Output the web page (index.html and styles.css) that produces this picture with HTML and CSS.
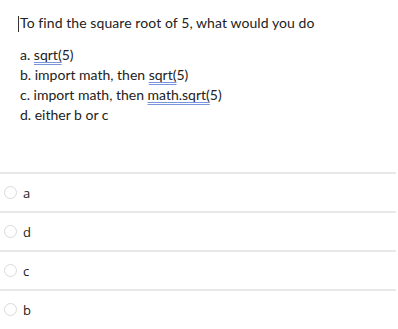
FILE: index.html
```html
<!DOCTYPE html>
<html>
<head>
<meta charset="utf-8">
<link rel="stylesheet" href="styles.css">
</head>
<body>
<div class="question">
  <p class="title"><span class="caret"></span>To find the square root of 5, what would you do</p>
  <div class="opts">
    <div>a. <span class="sq">sqrt(</span>5)</div>
    <div>b. import math, then <span class="sq">sqrt(</span>5)</div>
    <div>c. import math, then <span class="sq">math.sqrt(</span>5)</div>
    <div>d. either b or c</div>
  </div>
</div>
<div class="choices">
  <div class="choice"><span class="radio"></span><span class="lbl">a</span></div>
  <div class="choice"><span class="radio"></span><span class="lbl">d</span></div>
  <div class="choice"><span class="radio"></span><span class="lbl">c</span></div>
  <div class="choice"><span class="radio"></span><span class="lbl">b</span></div>
</div>
</body>
</html>
```
FILE: styles.css
```css
html, body {
  margin: 0;
  padding: 0;
  background: #fff;
}
body {
  width: 398px;
  height: 329px;
  overflow: hidden;
  font-family: "Lato", "Liberation Sans", sans-serif;
  color: #222;
}
.question {
  padding: 14px 0 0 20px;
  height: 172px;
  box-sizing: border-box;
}
.title {
  margin: 0;
  font-size: 14px;
  line-height: 18px;
  letter-spacing: 0.08px;
  position: relative;
}
.caret {
  position: absolute;
  left: -2px;
  top: 2px;
  width: 1px;
  height: 16px;
  background: #333;
}
.opts {
  margin-top: 13px;
  font-size: 14px;
  line-height: 20px;
}
.sq {
  text-decoration: underline double #7b95dd;
  text-underline-offset: 2px;
  text-decoration-thickness: 1px;
}
.choices {
  display: flex;
  flex-direction: column;
  width: 396px;
}
.choice {
  border-top: 2px solid #e8e8e8;
  height: 37px;
  display: flex;
  align-items: center;
  padding-left: 4px;
  gap: 6px;
  font-family: "Open Sans", "Liberation Sans", sans-serif;
  font-size: 13px;
  color: #222;
}
.radio {
  width: 13px;
  height: 13px;
  border: 1px solid #dadada;
  border-radius: 50%;
  box-sizing: border-box;
}
```
